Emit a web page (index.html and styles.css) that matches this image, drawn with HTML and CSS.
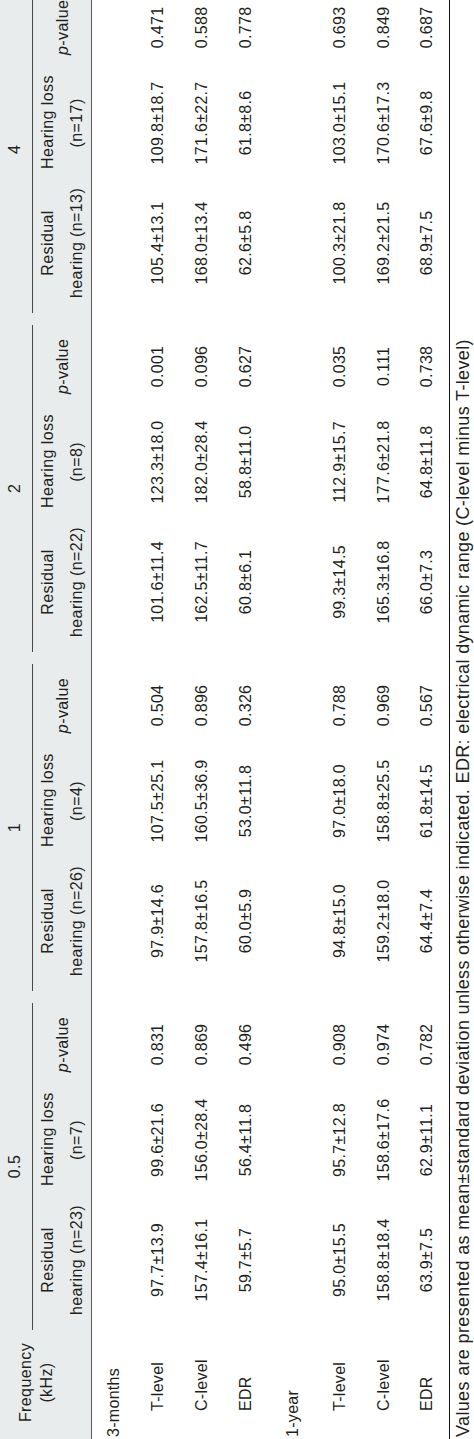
FILE: index.html
```html
<!DOCTYPE html>
<html lang="en">
<head>
<meta charset="utf-8">
<title>Table</title>
<link rel="stylesheet" href="styles.css">
</head>
<body>
<div class="page">
  <div class="sheet">
    <table class="tbl">
      <colgroup>
        <col class="c-lab">
        <col class="c-a"><col class="c-b"><col class="c-c">
        <col class="c-a"><col class="c-b"><col class="c-c">
        <col class="c-a"><col class="c-b"><col class="c-c">
        <col class="c-a"><col class="c-b"><col class="c-c">
      </colgroup>
      <thead>
        <tr class="h1">
          <th rowspan="2" class="freq">Frequency<br>(kHz)</th>
          <th colspan="3"><div class="grp">0.5</div></th>
          <th colspan="3"><div class="grp">1</div></th>
          <th colspan="3"><div class="grp">2</div></th>
          <th colspan="3"><div class="grp">4</div></th>
        </tr>
        <tr class="h2">
          <th>Residual<br>hearing (n=23)</th><th>Hearing loss<br>(n=7)</th><th><i>p</i>-value</th>
          <th>Residual<br>hearing (n=26)</th><th>Hearing loss<br>(n=4)</th><th><i>p</i>-value</th>
          <th>Residual<br>hearing (n=22)</th><th>Hearing loss<br>(n=8)</th><th><i>p</i>-value</th>
          <th>Residual<br>hearing (n=13)</th><th>Hearing loss<br>(n=17)</th><th><i>p</i>-value</th>
        </tr>
      </thead>
      <tbody>
        <tr class="sec sec-first"><td class="lab">3-months</td><td colspan="12"></td></tr>
        <tr class="row">
          <td class="lab sub">T-level</td>
          <td>97.7±13.9</td><td>99.6±21.6</td><td>0.831</td>
          <td>97.9±14.6</td><td>107.5±25.1</td><td>0.504</td>
          <td>101.6±11.4</td><td>123.3±18.0</td><td>0.001</td>
          <td>105.4±13.1</td><td>109.8±18.7</td><td>0.471</td>
        </tr>
        <tr class="row">
          <td class="lab sub">C-level</td>
          <td>157.4±16.1</td><td>156.0±28.4</td><td>0.869</td>
          <td>157.8±16.5</td><td>160.5±36.9</td><td>0.896</td>
          <td>162.5±11.7</td><td>182.0±28.4</td><td>0.096</td>
          <td>168.0±13.4</td><td>171.6±22.7</td><td>0.588</td>
        </tr>
        <tr class="row">
          <td class="lab sub">EDR</td>
          <td>59.7±5.7</td><td>56.4±11.8</td><td>0.496</td>
          <td>60.0±5.9</td><td>53.0±11.8</td><td>0.326</td>
          <td>60.8±6.1</td><td>58.8±11.0</td><td>0.627</td>
          <td>62.6±5.8</td><td>61.8±8.6</td><td>0.778</td>
        </tr>
        <tr class="sec sec-next"><td class="lab">1-year</td><td colspan="12"></td></tr>
        <tr class="row">
          <td class="lab sub">T-level</td>
          <td>95.0±15.5</td><td>95.7±12.8</td><td>0.908</td>
          <td>94.8±15.0</td><td>97.0±18.0</td><td>0.788</td>
          <td>99.3±14.5</td><td>112.9±15.7</td><td>0.035</td>
          <td>100.3±21.8</td><td>103.0±15.1</td><td>0.693</td>
        </tr>
        <tr class="row">
          <td class="lab sub">C-level</td>
          <td>158.8±18.4</td><td>158.6±17.6</td><td>0.974</td>
          <td>159.2±18.0</td><td>158.8±25.5</td><td>0.969</td>
          <td>165.3±16.8</td><td>177.6±21.8</td><td>0.111</td>
          <td>169.2±21.5</td><td>170.6±17.3</td><td>0.849</td>
        </tr>
        <tr class="row last">
          <td class="lab sub">EDR</td>
          <td>63.9±7.5</td><td>62.9±11.1</td><td>0.782</td>
          <td>64.4±7.4</td><td>61.8±14.5</td><td>0.567</td>
          <td>66.0±7.3</td><td>64.8±11.8</td><td>0.738</td>
          <td>68.9±7.5</td><td>67.6±9.8</td><td>0.687</td>
        </tr>
      </tbody>
    </table>
    <p class="note">Values are presented as mean±standard deviation unless otherwise indicated. EDR: electrical dynamic range (C-level minus T-level)</p>
  </div>
</div>
</body>
</html>
```
FILE: styles.css
```css
html, body {
  margin: 0;
  padding: 0;
  background: #ffffff;
}

.page {
  width: 474px;
  height: 1439px;
  overflow: hidden;
}

.sheet {
  width: 1439px;
  height: 474px;
  transform-origin: 0 0;
  transform: translateY(1439px) rotate(-90deg);
  font-family: "Liberation Sans", Arial, sans-serif;
  color: #231f20;
  background: #ffffff;
}

.tbl {
  border-collapse: collapse;
  table-layout: fixed;
  width: 1461px;
}

.c-lab { width: 105px; }
.c-a { width: 148px; }
.c-b { width: 92px; }
.c-c { width: 99px; }

.tbl thead th {
  background: #e9ecec;
  font-weight: normal;
  font-size: 16px;
  letter-spacing: 0.4px;
  padding: 0;
  text-align: center;
  white-space: nowrap;
}

.h1 th {
  height: 33px;
  vertical-align: top;
}

.grp {
  height: 33px;
  line-height: 29px;
  margin: 0 8px 0 4px;
  border-bottom: 1px solid #4a4a4a;
  box-sizing: border-box;
}

.h2 th {
  height: 56px;
  line-height: 29px;
  vertical-align: middle;
  border-bottom: 1.5px solid #5a5a5a;
}

.tbl thead th.freq {
  vertical-align: top;
  padding: 15px 0 0 8px;
  line-height: 21px;
  border-bottom: 1.5px solid #5a5a5a;
}

.tbl tbody td {
  font-size: 16px;
  letter-spacing: 0.3px;
  padding: 0;
  text-align: center;
  vertical-align: middle;
  white-space: nowrap;
  line-height: 20px;
}

.row { height: 44px; }

.sec td { vertical-align: top; }
.sec-first { height: 44px; }
.sec-first td { padding-top: 3px; }
.sec-next { height: 50px; }
.sec-next td { padding-top: 11px; }

.tbl tbody td.lab {
  text-align: left;
  padding-left: 2px;
}

.tbl tbody td.lab.sub {
  padding-left: 28px;
}

.last td {
  border-bottom: 1.5px solid #111111;
}

.note {
  margin: 0;
  padding: 2px 0 0 2px;
  font-size: 18px;
  letter-spacing: 0.35px;
  line-height: 22px;
  white-space: nowrap;
}
```
